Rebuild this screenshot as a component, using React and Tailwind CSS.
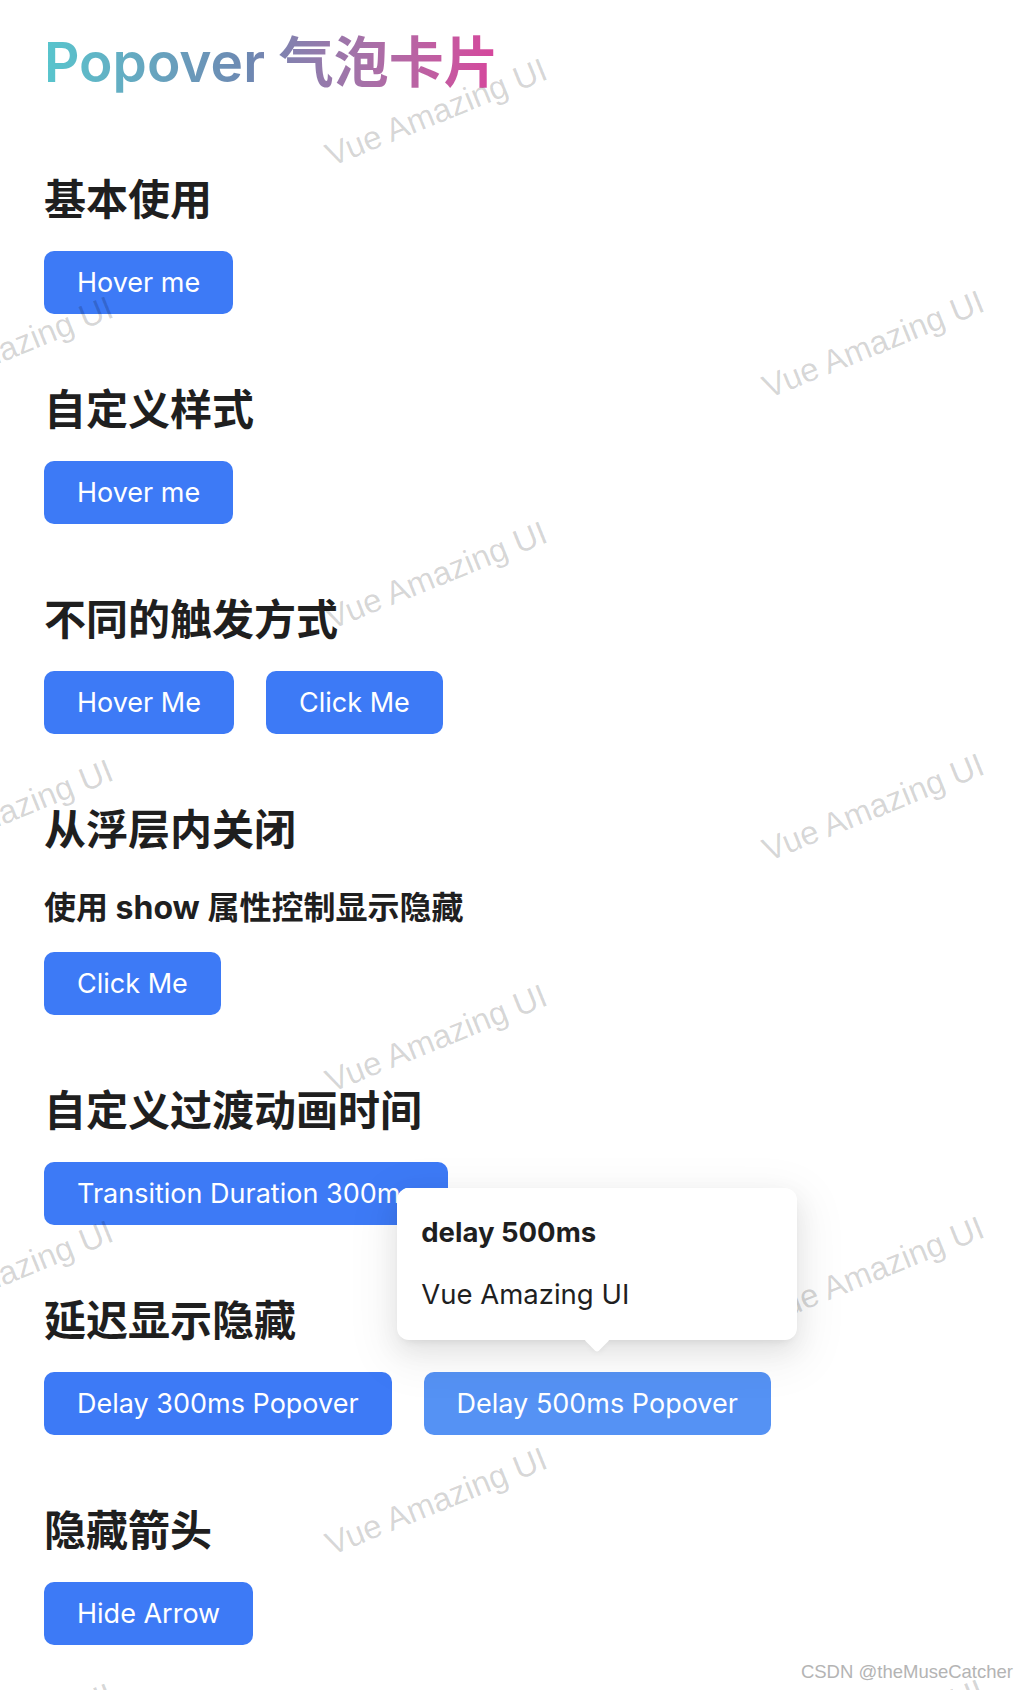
import React from 'react';

const marks = [
  'left-[436px] top-[112px]',
  'left-[436px] top-[575px]',
  'left-[436px] top-[1038px]',
  'left-[436px] top-[1501px]',
  'left-[873px] top-[344px]',
  'left-[873px] top-[807px]',
  'left-[873px] top-[1270px]',
  'left-[873px] top-[1733px]',
  'left-[2px] top-[350px]',
  'left-[2px] top-[813px]',
  'left-[2px] top-[1274px]',
  'left-[2px] top-[1737px]',
];

const Button = ({ children, hover = false }) => (
  <button
    className={
      'h-[63px] px-[33px] rounded-[10px] text-white text-[27px] leading-none flex items-center whitespace-nowrap ' +
      (hover ? 'bg-[#5592f4]' : 'bg-[#3d7af6]')
    }
  >
    {children}
  </button>
);

const Heading = ({ children }) => (
  <h2 className="text-[42px] leading-[50px] font-bold text-[#1f1f1f] mb-[26px]">{children}</h2>
);

const Popover = () => (
  <div className="absolute left-1/2 -translate-x-1/2 bottom-full mb-[32px] w-[400px] h-[152px] bg-white rounded-[12px] px-[24px] pt-[24px] shadow-[0_10px_26px_0_rgba(0,0,0,0.08),0_5px_10px_-6px_rgba(0,0,0,0.12),0_14px_45px_13px_rgba(0,0,0,0.05)] z-20">
    <div className="text-[27.5px] leading-[40px] font-bold text-[#1f1f1f]">delay 500ms</div>
    <div className="mt-[22px] text-[27.5px] leading-[40px] text-[#1f1f1f]">Vue Amazing UI</div>
    <div className="absolute left-1/2 -translate-x-1/2 bottom-[-8.5px] w-[17px] h-[17px] rotate-45 bg-white rounded-br-[3px] shadow-[3px_3px_7px_-3px_rgba(0,0,0,0.08)]" />
  </div>
);

export default function App() {
  return (
    <div className="relative min-h-[1690px] bg-white overflow-hidden font-[Inter,'Noto_Sans_CJK_SC',sans-serif] pl-[44px] pt-[29px]">
      <h1 className="text-[55px] leading-[66px] font-semibold">
        <span className="inline-block bg-gradient-to-r from-[#57c5cd] via-[#6d88b2] via-45% to-[#d7449c] bg-clip-text text-transparent">
          Popover 气泡卡片
        </span>
      </h1>

      <section className="mt-[80px]">
        <Heading>基本使用</Heading>
        <div className="flex">
          <Button>Hover me</Button>
        </div>
      </section>

      <section className="mt-[71px]">
        <Heading>自定义样式</Heading>
        <div className="flex">
          <Button>Hover me</Button>
        </div>
      </section>

      <section className="mt-[71px]">
        <Heading>不同的触发方式</Heading>
        <div className="flex gap-[32px]">
          <Button>Hover Me</Button>
          <Button>Click Me</Button>
        </div>
      </section>

      <section className="mt-[71px]">
        <h2 className="text-[42px] leading-[50px] font-bold text-[#1f1f1f]">从浮层内关闭</h2>
        <h3 className="mt-[33px] text-[32px] leading-[40px] font-bold text-[#1f1f1f]">使用 show 属性控制显示隐藏</h3>
        <div className="flex mt-[24px]">
          <Button>Click Me</Button>
        </div>
      </section>

      <section className="mt-[71px]">
        <Heading>自定义过渡动画时间</Heading>
        <div className="flex">
          <Button>Transition Duration 300ms</Button>
        </div>
      </section>

      <section className="mt-[71px]">
        <Heading>延迟显示隐藏</Heading>
        <div className="flex gap-[32px]">
          <Button>Delay 300ms Popover</Button>
          <div className="relative">
            <Popover />
            <Button hover>Delay 500ms Popover</Button>
          </div>
        </div>
      </section>

      <section className="mt-[71px]">
        <Heading>隐藏箭头</Heading>
        <div className="flex">
          <Button>Hide Arrow</Button>
        </div>
      </section>

      <div className="absolute inset-0 pointer-events-none z-10">
        {marks.map((pos, i) => (
          <span
            key={i}
            className={`absolute ${pos} -translate-x-1/2 -translate-y-1/2 -rotate-[22deg] whitespace-nowrap text-[33px] leading-none text-black/[0.17] font-['Liberation_Sans',Arial,sans-serif]`}
          >
            Vue Amazing UI
          </span>
        ))}
      </div>

      <div className="absolute right-[5px] top-[1663px] text-[18.5px] leading-none text-[#b4b4b4] font-['Liberation_Sans',Arial,sans-serif] z-30">
        CSDN @theMuseCatcher
      </div>
    </div>
  );
}
